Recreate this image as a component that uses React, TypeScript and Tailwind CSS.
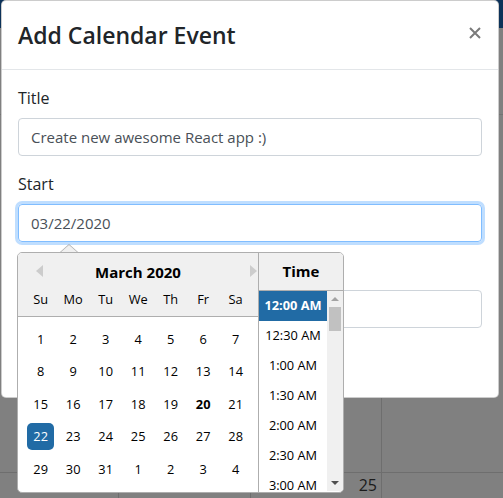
const FONT = "font-['Open_Sans',sans-serif]";

const WEEKS = [
  [1, 2, 3, 4, 5, 6, 7],
  [8, 9, 10, 11, 12, 13, 14],
  [15, 16, 17, 18, 19, 20, 21],
  [22, 23, 24, 25, 26, 27, 28],
  [29, 30, 31, 1, 2, 3, 4],
];

const DAY_NAMES = ["Su", "Mo", "Tu", "We", "Th", "Fr", "Sa"];

const TIMES = ["12:00 AM", "12:30 AM", "1:00 AM", "1:30 AM", "2:00 AM", "2:30 AM", "3:00 AM"];

function Field({ label, value, focused }: { label: string; value: string; focused?: boolean }) {
  return (
    <div className="flex flex-col mb-4">
      <label className="text-base leading-6 mb-2 text-[#212529]">{label}</label>
      <input
        readOnly
        value={value}
        className={`w-full h-[38px] rounded-[4px] border px-3 text-[15px] text-[#495057] outline-none ${
          focused
            ? "border-[#80bdff] shadow-[0_0_0_3px_rgba(0,123,255,0.25)]"
            : "border-[#ced4da]"
        }`}
      />
    </div>
  );
}

function DatePicker() {
  return (
    <div className="absolute left-[17px] top-[252px] text-[12.8px] text-black">
      {/* little arrow pointing at the input */}
      <div className="absolute left-[43px] -top-[8px] w-0 h-0 border-x-[9px] border-x-transparent border-b-[8px] border-b-[#aeaeae]" />
      <div className="absolute left-[44px] -top-[7px] w-0 h-0 border-x-[8px] border-x-transparent border-b-[7px] border-b-[#f0f0f0]" />

      <div className="flex bg-white border border-[#aeaeae] rounded-[5px] overflow-hidden">
        {/* month */}
        <div className="relative w-[240px] flex flex-col">
          <div className="bg-[#f0f0f0] border-b border-[#aeaeae] pt-2 flex flex-col">
            <div className="h-[22px] flex items-center justify-center text-[15px] font-bold">March 2020</div>
            <div className="grid grid-cols-[repeat(7,32.5px)] px-[6.4px]">
              {DAY_NAMES.map((d) => (
                <div key={d} className="h-[32.5px] flex items-center justify-center">
                  {d}
                </div>
              ))}
            </div>
          </div>
          <div className="absolute left-[18px] top-[12px] w-0 h-0 border-y-[6px] border-y-transparent border-r-[7px] border-r-[#cccccc]" />
          <div className="absolute left-[232px] top-[12px] w-0 h-0 border-y-[6px] border-y-transparent border-l-[7px] border-l-[#cccccc]" />

          <div className="grid grid-cols-[repeat(7,32.5px)] m-[6.4px]">
            {WEEKS.flat().map((d, i) => (
              <div key={i} className="h-[32.5px] flex items-center justify-center">
                <span
                  className={`w-[27px] h-[27px] flex items-center justify-center rounded-[5px] ${
                    i === 21 ? "bg-[#216ba5] text-white" : ""
                  } ${i === 19 ? "font-bold" : ""}`}
                >
                  {d}
                </span>
              </div>
            ))}
          </div>
        </div>

        {/* time */}
        <div className="w-[85px] border-l border-[#aeaeae] flex flex-col">
          <div className="h-[38px] bg-[#f0f0f0] border-b border-[#aeaeae] flex items-center justify-center text-[15px] font-bold">
            Time
          </div>
          <div className="flex h-[200px] overflow-hidden">
            <div className="flex-1 flex flex-col">
              {TIMES.map((t, i) => (
                <div
                  key={t}
                  className={`h-[30px] shrink-0 flex items-center justify-center whitespace-nowrap ${
                    i === 0 ? "bg-[#216ba5] text-white font-bold" : ""
                  }`}
                >
                  {t}
                </div>
              ))}
            </div>
            {/* scrollbar */}
            <div className="w-[16px] bg-[#f0f0f0] flex flex-col items-center">
              <div className="h-[16px] flex items-center justify-center">
                <div className="w-0 h-0 border-x-[4px] border-x-transparent border-b-[4px] border-b-[#a3a3a3]" />
              </div>
              <div className="w-[12px] h-[24px] bg-[#c1c1c1]" />
              <div className="flex-1" />
              <div className="h-[16px] flex items-center justify-center">
                <div className="w-0 h-0 border-x-[4px] border-x-transparent border-t-[4px] border-t-[#505050]" />
              </div>
            </div>
          </div>
        </div>
      </div>
    </div>
  );
}

export default function App() {
  return (
    <div className={`relative w-[503px] h-[498px] overflow-hidden bg-[#808080] flex flex-col ${FONT}`}>
      {/* page behind the backdrop */}
      <div className="h-[28px] bg-[#0c3259] shrink-0" />
      <div className="h-[87px] border-b border-[#737373] shrink-0" />
      <div className="flex-1 flex">
        <div className="w-[118px]" />
        <div className="w-[132px] border-l border-[#6e6e6e]" />
        <div className="w-[131px] border-l border-[#6e6e6e]" />
        <div className="flex-1 border-l border-[#6e6e6e]" />
      </div>
      <div className="h-[26px] flex border-t border-[#6e6e6e] shrink-0">
        <div className="w-[118px]" />
        <div className="w-[132px] border-l border-[#6e6e6e]" />
        <div className="w-[131px] border-l border-[#6e6e6e] flex justify-end pr-[4px] text-base leading-6 text-[#1b1b1b]">
          25
        </div>
        <div className="flex-1 border-l border-[#6e6e6e]" />
      </div>

      {/* modal */}
      <div className="absolute left-[1px] top-0 w-[498px] h-[398px] bg-white rounded-[5px] border border-black/20 flex flex-col">
        <div className="flex items-start justify-between p-4 border-b border-[#e3e6e9]">
          <h4 className="text-[23px] leading-[36px] font-semibold text-[#212529]">Add Calendar Event</h4>
          <svg width="12" height="12" viewBox="0 0 12 12" className="mt-[10px] mr-[1px]">
            <path d="M1 1L11 11M11 1L1 11" stroke="#7a7a7a" strokeWidth="2" />
          </svg>
        </div>
        <div className="p-4 flex flex-col">
          <Field label="Title" value="Create new awesome React app :)" />
          <Field label="Start" value="03/22/2020" focused />
          <Field label="End" value="" />
        </div>
      </div>

      <DatePicker />
    </div>
  );
}
